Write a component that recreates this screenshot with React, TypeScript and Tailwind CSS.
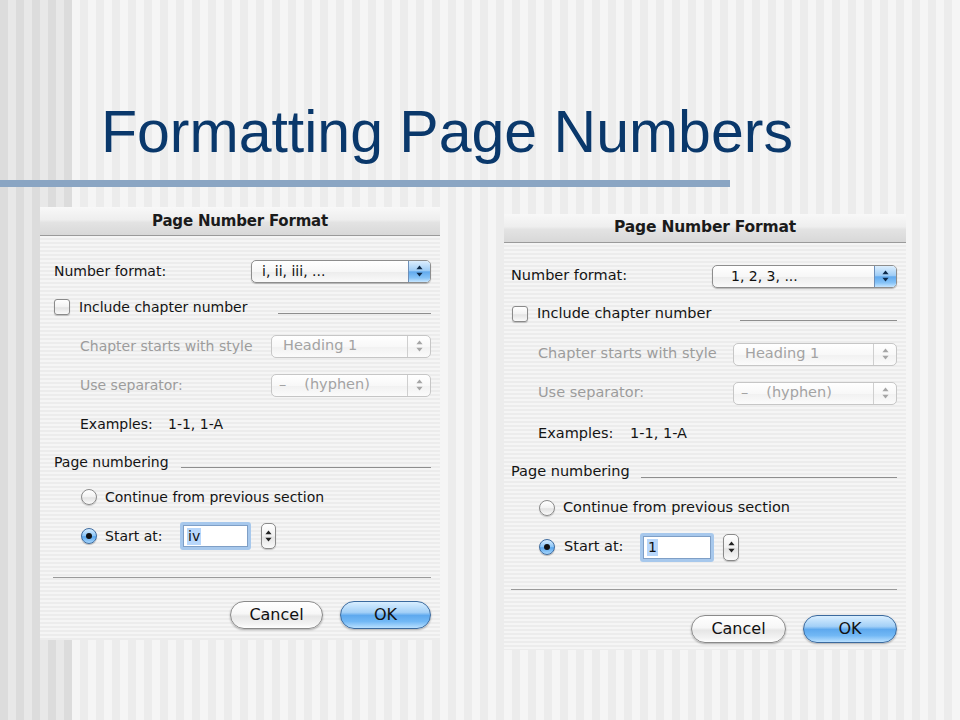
import React from "react";

type V = {
  dialog: string;
  titleText: string;
  body: string;
  r1: string;
  pop1: string;
  pop1Text: string;
  r2: string;
  cb: string;
  line2: string;
  r3: string;
  pop3: string;
  r4: string;
  r5: string;
  exLabel: string;
  r6: string;
  line6: string;
  r7: string;
  r8: string;
  startLabel: string;
  field: string;
  stepper: string;
  sep: string;
  btns: string;
  cancel: string;
  ok: string;
  formatText: string;
  fieldText: string;
};

const V1: V = {
  dialog: "w-[400px]",
  titleText: "text-[15px]",
  body: "pl-[14px] pr-[9px] pt-[23px] pb-[11px] text-[14px]",
  r1: "h-[24px]",
  pop1: "w-[180px]",
  pop1Text: "pl-[10px]",
  r2: "mt-[12px] h-[24px]",
  cb: "ml-0",
  line2: "w-[153px]",
  r3: "mt-[15px] h-[24px] pl-[26px]",
  pop3: "w-[160px]",
  r4: "mt-[15px] h-[24px] pl-[26px]",
  r5: "mt-[15px] h-[24px] pl-[26px]",
  exLabel: "w-[88px]",
  r6: "mt-[14px] h-[24px]",
  line6: "w-[250px]",
  r7: "mt-[11px] h-[24px] pl-[27px]",
  r8: "mt-[13px] h-[28px] pl-[27px]",
  startLabel: "w-[75px] ml-[8px]",
  field: "w-[71px] h-[28px]",
  stepper: "ml-[10px] w-[15px] h-[26px]",
  sep: "mt-[27px] -ml-[1px]",
  btns: "mt-[23px] h-[28px]",
  cancel: "w-[93px]",
  ok: "w-[91px] ml-[17px]",
  formatText: "i, ii, iii, ...",
  fieldText: "iv",
};

const V2: V = {
  dialog: "w-[402px]",
  titleText: "text-[15.5px]",
  body: "pl-[7px] pr-[9px] pt-[21px] pb-[7px] text-[14.5px]",
  r1: "h-[24px]",
  pop1: "w-[185px]",
  pop1Text: "pl-[18px]",
  r2: "mt-[14px] h-[24px]",
  cb: "ml-[1px]",
  line2: "w-[157px]",
  r3: "mt-[16px] h-[24px] pl-[27px]",
  pop3: "w-[164px]",
  r4: "mt-[15px] h-[24px] pl-[27px]",
  r5: "mt-[17px] h-[24px] pl-[27px]",
  exLabel: "w-[92px]",
  r6: "mt-[14px] h-[24px]",
  line6: "w-[256px]",
  r7: "mt-[12px] h-[24px] pl-[28px]",
  r8: "mt-[13px] h-[28px] pl-[28px]",
  startLabel: "w-[76px] ml-[9px]",
  field: "w-[74px] h-[29px]",
  stepper: "ml-[9px] w-[16px] h-[27px]",
  sep: "mt-[28px]",
  btns: "mt-[25px] h-[28px]",
  cancel: "w-[95px]",
  ok: "w-[94px] ml-[17px]",
  formatText: "1, 2, 3, ...",
  fieldText: "1",
};

function Arrows({ color }: { color: string }) {
  return (
    <svg width="7" height="12" viewBox="0 0 7 12">
      <path d="M3.5 0.5 L6.6 4.3 H0.4 Z" fill={color} />
      <path d="M3.5 11.5 L6.6 7.7 H0.4 Z" fill={color} />
    </svg>
  );
}

function PopupActive({ w, pad, text }: { w: string; pad: string; text: string }) {
  return (
    <div
      className={`ml-auto ${w} h-[23px] flex rounded-[5px] border border-[#8d8d8d] bg-[linear-gradient(180deg,#ffffff_0%,#f7f7f7_50%,#ececec_51%,#fafafa_100%)] shadow-[0_1px_1px_rgba(0,0,0,0.25)] overflow-hidden`}
    >
      <div className={`flex-1 flex items-center ${pad} text-[#111] text-[14px]`}>{text}</div>
      <div className="w-[22px] flex items-center justify-center border-l border-[#6d8fb8] bg-[linear-gradient(180deg,#dceefe_0%,#9fcdf6_45%,#62aaee_52%,#86c3f7_80%,#c7e6ff_100%)]">
        <Arrows color="#0e2a4a" />
      </div>
    </div>
  );
}

function PopupDisabled({ w, children }: { w: string; children: React.ReactNode }) {
  return (
    <div
      className={`ml-auto ${w} h-[23px] flex rounded-[5px] border border-[#c6c6c6] bg-[linear-gradient(180deg,#ffffff_0%,#f8f8f8_50%,#f1f1f1_51%,#fbfbfb_100%)] overflow-hidden`}
    >
      <div className="flex-1 flex items-center text-[#a3a3a3] text-[14.5px]">{children}</div>
      <div className="w-[23px] flex items-center justify-center border-l border-[#cfcfcf]">
        <Arrows color="#a5a5a5" />
      </div>
    </div>
  );
}

function Checkbox({ cls }: { cls: string }) {
  return (
    <div
      className={`${cls} w-[16px] h-[16px] shrink-0 rounded-[3px] border border-[#8a8a8a] bg-[linear-gradient(180deg,#ffffff_0%,#f2f2f2_50%,#e3e3e3_55%,#fafafa_100%)] shadow-[0_1px_1px_rgba(0,0,0,0.2)]`}
    />
  );
}

function Radio({ on }: { on?: boolean }) {
  if (on) {
    return (
      <div className="w-[16px] h-[16px] shrink-0 rounded-full border border-[#3f6c9f] bg-[linear-gradient(180deg,#d5ecff_0%,#8cc6f7_48%,#5aa7ee_55%,#a6d5fb_100%)] flex items-center justify-center shadow-[0_1px_1px_rgba(0,0,0,0.25)]">
        <div className="w-[6px] h-[6px] rounded-full bg-[#111]" />
      </div>
    );
  }
  return (
    <div className="w-[16px] h-[16px] shrink-0 rounded-full border border-[#8a8a8a] bg-[linear-gradient(180deg,#ffffff_0%,#f2f2f2_50%,#e2e2e2_55%,#fafafa_100%)] shadow-[0_1px_1px_rgba(0,0,0,0.2)]" />
  );
}

function Dialog({ v }: { v: V }) {
  return (
    <div className={`${v.dialog} shrink-0 flex flex-col [font-family:'DejaVu_Sans',sans-serif]`}>
      <div className="h-[29px] flex items-center justify-center border-b border-[#9a9a9a] bg-[linear-gradient(180deg,#f8f8f8_0%,#eeeeee_45%,#e3e3e3_55%,#d8d8d8_100%)]">
        <span className={`${v.titleText} font-bold text-[#1b1b1b] tracking-[-0.2px]`}>Page Number Format</span>
      </div>
      <div
        className={`${v.body} flex flex-col text-[#141414] bg-[repeating-linear-gradient(180deg,#f5f5f5_0px,#f5f5f5_2px,#ececec_2px,#ececec_4px)]`}
      >
        <div className={`${v.r1} flex items-center`}>
          <span>Number format:</span>
          <PopupActive w={v.pop1} pad={v.pop1Text} text={v.formatText} />
        </div>

        <div className={`${v.r2} flex items-center`}>
          <Checkbox cls={v.cb} />
          <span className="ml-[9px]">Include chapter number</span>
          <div className={`ml-auto ${v.line2} h-px bg-[#8e8e8e] self-end mb-[5px]`} />
        </div>

        <div className={`${v.r3} flex items-center text-[#9c9c9c]`}>
          <span>Chapter starts with style</span>
          <PopupDisabled w={v.pop3}>
            <span className="pl-[11px]">Heading 1</span>
          </PopupDisabled>
        </div>

        <div className={`${v.r4} flex items-center text-[#9c9c9c]`}>
          <span>Use separator:</span>
          <PopupDisabled w={v.pop3}>
            <span className="pl-[7px]">–</span>
            <span className="pl-[18px]">(hyphen)</span>
          </PopupDisabled>
        </div>

        <div className={`${v.r5} flex items-center`}>
          <span className={v.exLabel}>Examples:</span>
          <span>1-1, 1-A</span>
        </div>

        <div className={`${v.r6} flex items-center`}>
          <span>Page numbering</span>
          <div className={`ml-auto ${v.line6} h-px bg-[#8e8e8e] self-end mb-[6px]`} />
        </div>

        <div className={`${v.r7} flex items-center`}>
          <Radio />
          <span className="ml-[8px]">Continue from previous section</span>
        </div>

        <div className={`${v.r8} flex items-center`}>
          <Radio on />
          <span className={`${v.startLabel} shrink-0`}>Start at:</span>
          <div className={`${v.field} shrink-0 rounded-[3px] bg-[#a7c8ec] p-[3px] flex`}>
            <div className="flex-1 bg-white border border-[#7f9fc6] flex items-center pl-[3px] text-[14px] text-[#111]">
              <span className="bg-[#b8d7fb] px-[1px] leading-[17px]">{v.fieldText}</span>
            </div>
          </div>
          <div
            className={`${v.stepper} shrink-0 rounded-[5px] border border-[#8a8a8a] bg-[linear-gradient(180deg,#ffffff_0%,#f0f0f0_50%,#e4e4e4_55%,#fafafa_100%)] flex items-center justify-center shadow-[0_1px_1px_rgba(0,0,0,0.2)]`}
          >
            <Arrows color="#222" />
          </div>
        </div>

        <div className={`${v.sep} h-px bg-[#9a9a9a]`} />

        <div className={`${v.btns} flex items-center justify-end`}>
          <div
            className={`${v.cancel} h-[28px] rounded-full border border-[#8a8a8a] bg-[linear-gradient(180deg,#ffffff_0%,#f7f7f7_45%,#e6e6e6_55%,#f3f3f3_85%,#ffffff_100%)] shadow-[0_1px_2px_rgba(0,0,0,0.3)] flex items-center justify-center text-[16px] text-[#111]`}
          >
            Cancel
          </div>
          <div
            className={`${v.ok} h-[28px] rounded-full border border-[#3b6a9e] bg-[linear-gradient(180deg,#d8eeff_0%,#a3d0f7_40%,#5ea9ee_52%,#72b8f5_75%,#b9e0ff_100%)] shadow-[0_1px_2px_rgba(0,0,0,0.3)] flex items-center justify-center text-[16px] text-[#111]`}
          >
            OK
          </div>
        </div>
      </div>
    </div>
  );
}

export default function App() {
  return (
    <div
      className="w-[960px] h-[720px] overflow-hidden [background:repeating-linear-gradient(90deg,#dcdcdc_0px,#dcdcdc_8px,#e8e8e8_8px,#e8e8e8_16px)_0_0/72px_100%_no-repeat,repeating-linear-gradient(90deg,#ececec_0px,#ececec_8px,#f5f5f5_8px,#f5f5f5_16px)]"
    >
      <h1 className="pt-[103px] pl-[101px] text-[59px] leading-none text-[#0a386b] [font-family:'Liberation_Sans',Arial,sans-serif] font-normal">
        Formatting Page Numbers
      </h1>
      <div className="mt-[18px] w-[730px] h-[7px] bg-[#8aa5c3]" />
      <div className="flex items-start pt-[20px] pl-[40px]">
        <Dialog v={V1} />
        <div className="ml-[64px] mt-[7px]">
          <Dialog v={V2} />
        </div>
      </div>
    </div>
  );
}
